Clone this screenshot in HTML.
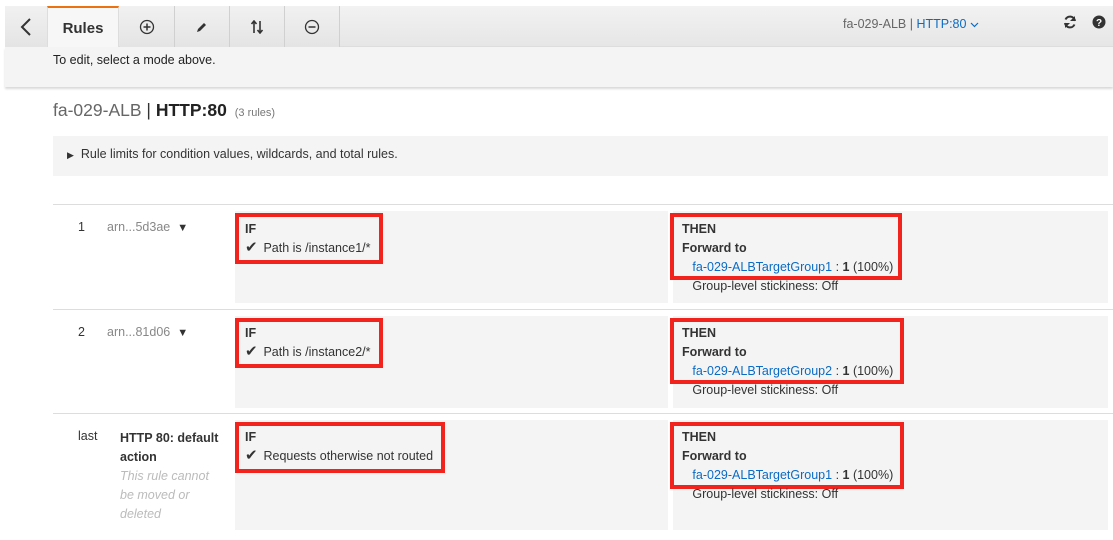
<!DOCTYPE html>
<html><head><meta charset="utf-8"><style>
*{margin:0;padding:0;box-sizing:border-box}
body{width:1113px;height:540px;background:#fff;font-family:"Liberation Sans",Arial,sans-serif;color:#333;position:relative;overflow:hidden;font-size:12.5px}
.a{position:absolute}
.tb{left:5px;top:6px;width:1108px;height:41px;background:linear-gradient(#f2f2f2,#e6e6e6);border-bottom:1px solid #ddd}
.btn{top:6px;height:41px;background:linear-gradient(#f1f1f1,#e4e4e4);border-right:1px solid #d0d0d0;display:flex;align-items:center;justify-content:center;color:#444}
.info{left:5px;top:47px;width:1108px;height:40px;background:#f4f4f4;box-shadow:0 2px 2px rgba(0,0,0,.15)}
.gray{background:#f4f4f4}
.hr{height:1px;background:#ddd;left:53px;width:1060px}
.red{border:4px solid #f2231d}
b{font-weight:bold}
.lk{color:#0b6bc4}
.chk{display:inline-block;width:15px;font-size:15px;line-height:12px}
.ar{color:#333;font-size:11px}
</style></head><body>
<div class="a tb"></div>
<div class="a btn" style="left:5px;width:42px;font-size:22px;border-right:none">
<svg width="12" height="18" viewBox="0 0 12 18"><path d="M10 1 L2 9 L10 17" fill="none" stroke="#333" stroke-width="2"/></svg></div>
<div class="a" style="left:47px;top:6px;width:72px;height:42px;background:#f7f7f7;border-top:2px solid #ec7211;border-left:1px solid #ddd;border-right:1px solid #ddd;display:flex;align-items:center;justify-content:center;font-weight:bold;font-size:15px;color:#333">Rules</div>
<div class="a btn" style="left:120px;width:55px"><svg width="16" height="16"><circle cx="8" cy="8" r="6.5" fill="none" stroke="#333" stroke-width="1.3"/><path d="M8 4.5v7M4.5 8h7" stroke="#333" stroke-width="1.5"/></svg></div>
<div class="a btn" style="left:175px;width:55px"><svg width="14" height="14"><path d="M2 12l1-3 6-6 2 2-6 6z" fill="#333"/></svg></div>
<div class="a btn" style="left:230px;width:55px"><svg width="14" height="14"><path d="M4 1v12M1.5 4L4 1 6.5 4M10 1v12M7.5 10L10 13 12.5 10" fill="none" stroke="#333" stroke-width="1.6"/></svg></div>
<div class="a btn" style="left:285px;width:55px"><svg width="16" height="16"><circle cx="8" cy="8" r="6.5" fill="none" stroke="#333" stroke-width="1.3"/><path d="M4.5 8h7" stroke="#333" stroke-width="1.5"/></svg></div>
<div class="a" style="left:843px;top:17px;font-size:12.5px;color:#666">fa-029-ALB&nbsp;| <span class="lk">HTTP:80</span> <svg width="9" height="6" viewBox="0 0 9 6"><path d="M1 1l3.5 3.5L8 1" fill="none" stroke="#0b6bc4" stroke-width="1.2"/></svg></div>
<svg class="a" style="left:1063px;top:15px" width="14" height="14" viewBox="0 0 14 14"><path d="M12 6A5 5 0 0 0 2.5 4.5M2 8a5 5 0 0 0 9.5 1.5" fill="none" stroke="#333" stroke-width="2"/><path d="M12 1v5H7z M2 13V8h5z" fill="#333"/></svg>
<svg class="a" style="left:1092px;top:15px" width="14" height="14" viewBox="0 0 14 14"><circle cx="7" cy="7" r="6.5" fill="#333"/><text x="7" y="11" font-size="10" font-weight="bold" text-anchor="middle" fill="#fff" font-family="Liberation Sans">?</text></svg>
<div class="a info"></div>
<div class="a" style="left:53px;top:53px;font-size:12.5px;color:#222">To edit, select a mode above.</div>
<div class="a" style="left:53px;top:100px;font-size:17.5px;color:#666">fa-029-ALB <span style="color:#333">|</span> <b style="color:#222">HTTP:80</b> <span style="font-size:11px;color:#777">&nbsp;(3 rules)</span></div>
<div class="a gray" style="left:53px;top:136px;width:1055px;height:40px"></div>
<div class="a" style="left:67px;top:147px;color:#333"><span style="font-size:9px">&#9654;</span>&nbsp; Rule limits for condition values, wildcards, and total rules.</div>

<div class="a hr" style="top:204px"></div>
<div class="a hr" style="top:309px"></div>
<div class="a hr" style="top:413px"></div>

<div class="a gray" style="left:235px;top:211px;width:433px;height:92px"></div>
<div class="a gray" style="left:673px;top:211px;width:435px;height:92px"></div>
<div class="a gray" style="left:235px;top:316px;width:433px;height:92px"></div>
<div class="a gray" style="left:673px;top:316px;width:435px;height:92px"></div>
<div class="a gray" style="left:235px;top:420px;width:433px;height:110px"></div>
<div class="a gray" style="left:673px;top:420px;width:435px;height:110px"></div>

<div class="a" style="left:78px;top:220px">1</div>
<div class="a" style="left:107px;top:220px;color:#888">arn...5d3ae &nbsp;<span class="ar">&#9660;</span></div>
<div class="a" style="left:78px;top:325px">2</div>
<div class="a" style="left:107px;top:325px;color:#888">arn...81d06 &nbsp;<span class="ar">&#9660;</span></div>
<div class="a" style="left:78px;top:429px">last</div>
<div class="a" style="left:120px;top:429px;line-height:19px;width:100px"><b>HTTP 80: default action</b><br><i style="color:#bbb">This rule cannot be moved or deleted</i></div>

<div class="a red" style="left:235px;top:213px;width:148px;height:51px"></div>
<div class="a red" style="left:670px;top:213px;width:232px;height:67px"></div>
<div class="a red" style="left:235px;top:318px;width:148px;height:50px"></div>
<div class="a red" style="left:670px;top:318px;width:234px;height:66px"></div>
<div class="a red" style="left:235px;top:422px;width:210px;height:51px"></div>
<div class="a red" style="left:670px;top:422px;width:234px;height:67px"></div>

<div class="a" style="left:245px;top:220px;line-height:19px"><b>IF</b><br><span class="chk">&#10004;</span> Path is /instance1/*</div>
<div class="a" style="left:245px;top:324px;line-height:19px"><b>IF</b><br><span class="chk">&#10004;</span> Path is /instance2/*</div>
<div class="a" style="left:245px;top:428px;line-height:19px"><b>IF</b><br><span class="chk">&#10004;</span> Requests otherwise not routed</div>

<div class="a" style="left:682px;top:220px;line-height:19px"><b>THEN</b><br><b>Forward to</b><br>&nbsp;&nbsp; <span class="lk">fa-029-ALBTargetGroup1</span> : <b>1</b> (100%)<br>&nbsp;&nbsp; Group-level stickiness: Off</div>
<div class="a" style="left:682px;top:324px;line-height:19px"><b>THEN</b><br><b>Forward to</b><br>&nbsp;&nbsp; <span class="lk">fa-029-ALBTargetGroup2</span> : <b>1</b> (100%)<br>&nbsp;&nbsp; Group-level stickiness: Off</div>
<div class="a" style="left:682px;top:428px;line-height:19px"><b>THEN</b><br><b>Forward to</b><br>&nbsp;&nbsp; <span class="lk">fa-029-ALBTargetGroup1</span> : <b>1</b> (100%)<br>&nbsp;&nbsp; Group-level stickiness: Off</div>
</body></html>
